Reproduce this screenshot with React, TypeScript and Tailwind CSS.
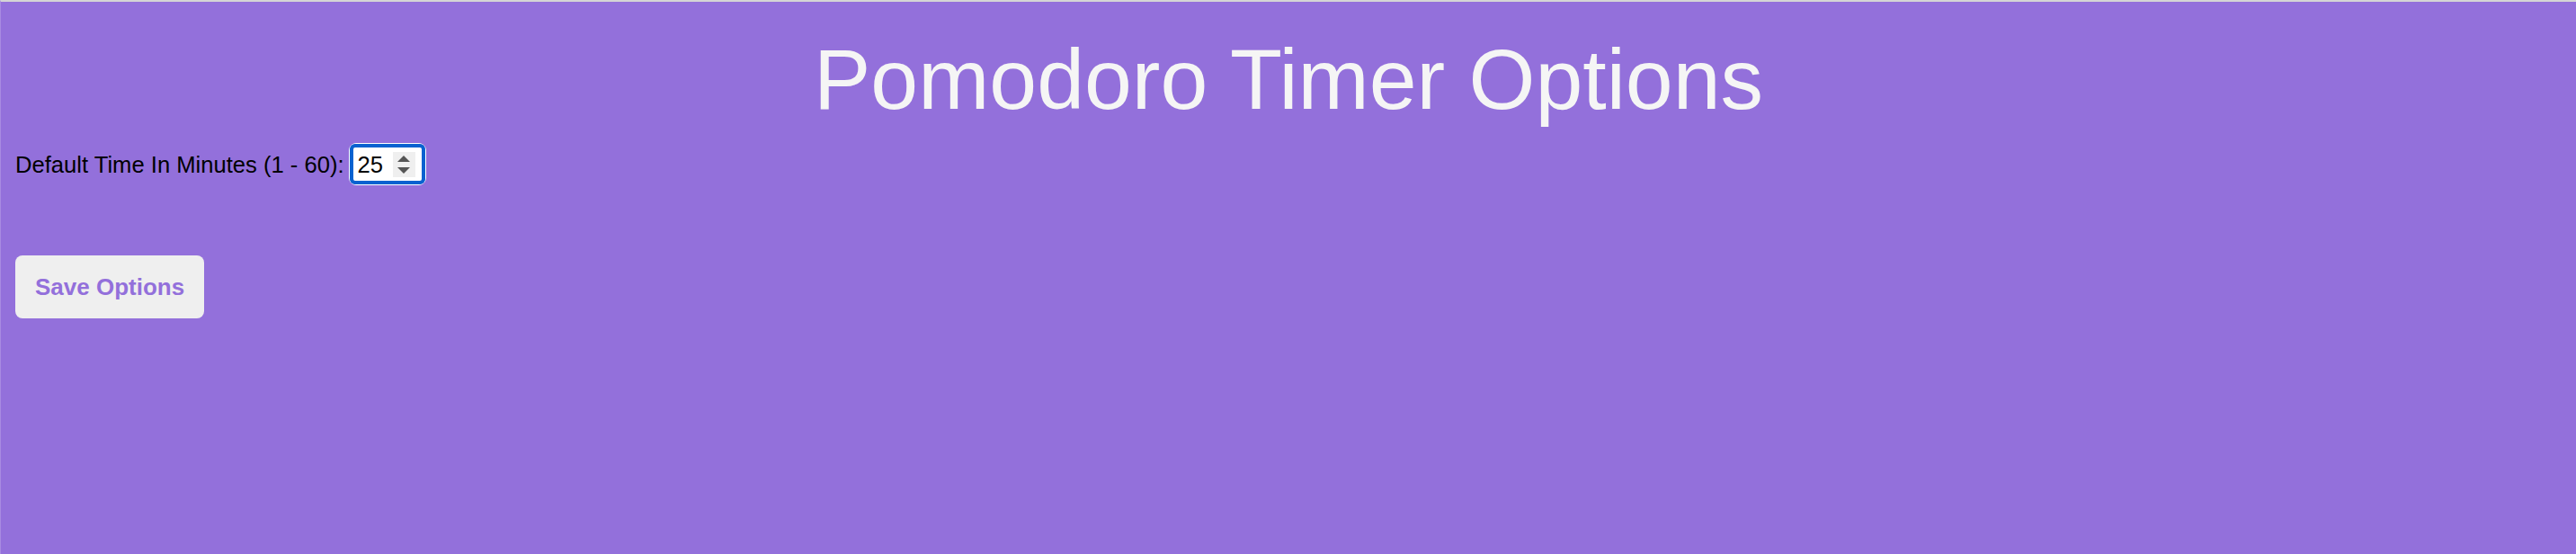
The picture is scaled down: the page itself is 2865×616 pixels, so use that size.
export default function App() {
  return (
    <div className="min-h-screen w-full border-t-2 border-l border-t-[#d5d5d5] border-l-[#a88ae2] bg-[#9370db] px-4 font-['Liberation_Sans',Arial,sans-serif]">
      <h1 className="mt-[32px] text-center text-[95px] leading-[108px] font-normal text-[#f5f5f5]">
        Pomodoro Timer Options
      </h1>

      <div className="mt-[17px] flex items-center gap-[5px]">
        <label htmlFor="default-time" className="text-[25.6px] leading-[30px] text-black">
          Default Time In Minutes (1 - 60):
        </label>
        <div className="rounded-[8px] border border-white">
          <div className="flex h-[45px] w-[84px] items-center rounded-[6px] border-4 border-[#0862d0] bg-white pr-[7px] pl-[5px]">
            <input
              id="default-time"
              type="text"
              readOnly
              value="25"
              className="w-[38px] bg-transparent text-[25.6px] leading-[30px] text-black outline-none"
            />
            <div className="ml-auto flex h-[28px] w-[25px] flex-col items-center justify-center gap-[6px] bg-[#efefef]">
              <svg width="14" height="7" viewBox="0 0 14 7">
                <path d="M7 0 L14 7 L0 7 Z" fill="#555555" />
              </svg>
              <svg width="14" height="7" viewBox="0 0 14 7">
                <path d="M0 0 L14 0 L7 7 Z" fill="#555555" />
              </svg>
            </div>
          </div>
        </div>
      </div>

      <button className="mt-[78px] rounded-lg bg-[#efefef] px-[22px] py-[20px] text-[26px] leading-[30px] font-bold text-[#9370db]">
        Save Options
      </button>
    </div>
  );
}
